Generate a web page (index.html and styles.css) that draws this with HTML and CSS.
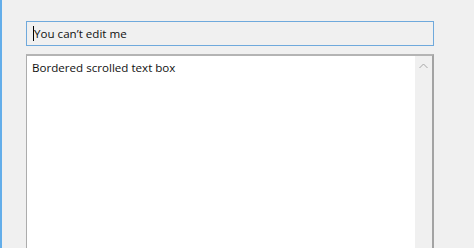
FILE: index.html
```html
<!DOCTYPE html>
<html lang="en">
<head>
  <meta charset="UTF-8" />
  <title>Text boxes</title>
  <link rel="stylesheet" href="styles.css">
</head>
<body>
  <div class="window">
    <div class="readonly-box">
      <span class="caret"></span><span>You can’t edit me</span>
    </div>

    <div class="scroll-box">
      <div class="scroll-text">Bordered scrolled text box</div>
      <div class="scrollbar">
        <svg class="arrow" width="9" height="6" viewBox="0 0 9 6">
          <path d="M0.5 5 L4.5 1 L8.5 5" fill="none" stroke="#a6a6a6" stroke-width="1" />
        </svg>
      </div>
    </div>
  </div>
</body>
</html>
```

FILE: styles.css
```css
html, body {
  margin: 0;
  height: 100%;
  overflow: hidden;
}

body {
  background: #f0f0f0;
  font-family: 'Open Sans', 'Noto Sans', sans-serif;
  font-size: 11.6px;
  color: #111;
}

.window {
  border-left: 2px solid #63aeea;
  height: 100%;
  box-sizing: border-box;
  padding: 21px 0 0 24px;
}

.readonly-box {
  width: 408px;
  height: 25px;
  box-sizing: border-box;
  border: 1px solid #6fa9dc;
  background: #f0f0f0;
  display: flex;
  align-items: center;
  padding-left: 6px;
}

.caret {
  display: inline-block;
  width: 1px;
  height: 15px;
  background: #000;
}

.scroll-box {
  margin-top: 8px;
  width: 408px;
  height: 196px;
  box-sizing: border-box;
  border: 1px solid #acacac;
  border-top: 2px solid #b4b4b4;
  border-right: 2px solid #a3a3a3;
  background: #fff;
  display: flex;
}

.scroll-text {
  flex: 1;
  padding: 4px 0 0 5px;
}

.scrollbar {
  width: 17px;
  background: #f0f0f0;
  display: flex;
  justify-content: center;
  align-items: flex-start;
}

.arrow {
  margin-top: 7px;
}
```
